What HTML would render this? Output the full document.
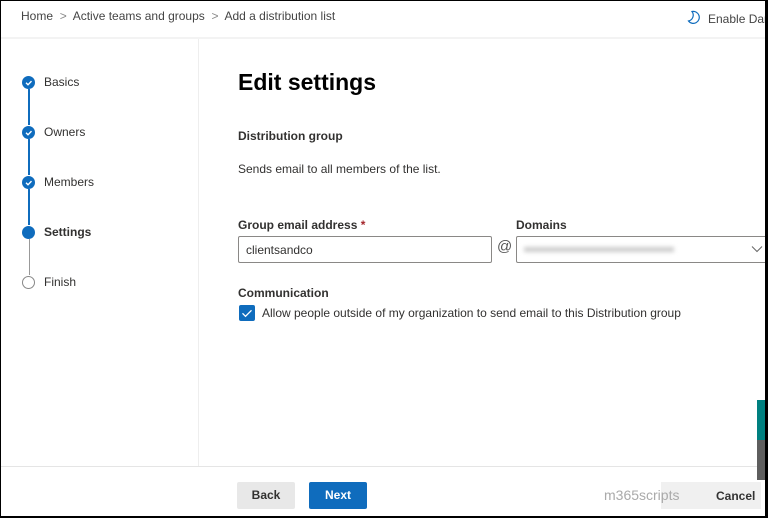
<!DOCTYPE html>
<html><head><meta charset="utf-8"><style>
*{margin:0;padding:0;box-sizing:border-box}
body{width:768px;height:518px;overflow:hidden;background:#000;font-family:"Liberation Sans",sans-serif;color:#323130;position:relative}
#p{position:absolute;left:1px;top:1px;width:764px;height:515px;background:#fff;overflow:hidden}
.a{position:absolute;white-space:nowrap}
.t{font-size:12px}
.st{position:absolute;left:21px;width:13px;height:13px;border-radius:50%;background:#0f6cbd}
.ln{position:absolute;left:27px;width:2px;height:36px;background:#0f6cbd}
</style></head><body><div id="p">
<div class="a t" style="left:20px;top:8px;color:#444">Home &nbsp;<span style="color:#888">&gt;</span>&nbsp; Active teams and groups &nbsp;<span style="color:#888">&gt;</span>&nbsp; Add a distribution list</div>
<svg class="a" style="left:686px;top:9px" width="14" height="14" viewBox="0 0 14 14"><path d="M5 1.5 A6 6 0 1 1 1.5 11 A6 6 0 0 0 5 1.5Z" fill="none" stroke="#0f6cbd" stroke-width="1.2"/></svg>
<div class="a t" style="left:707px;top:11px;color:#444">Enable Dark</div>
<div class="a" style="left:0;top:36px;width:764px;height:2px;background:#f3f3f3"></div>
<div class="a" style="left:197px;top:38px;width:1px;height:428px;background:#eee"></div>
<div class="a" style="left:0;top:465px;width:764px;height:1px;background:#e5e5e5"></div>

<div class="ln" style="top:88px"></div><div class="ln" style="top:138px"></div><div class="ln" style="top:188px"></div>
<div class="ln" style="top:238px;background:#999;width:1px;left:27.5px"></div>
<div class="st" style="top:75px"></div><div class="st" style="top:125px"></div><div class="st" style="top:175px"></div><div class="st" style="top:225px"></div>
<div class="st" style="top:275px;background:#fff;border:1.5px solid #888"></div>
<svg class="a" style="left:21px;top:75px" width="13" height="163"><g fill="none" stroke="#fff" stroke-width="1.4"><path d="M4 6.8l2 2 3.5-3.7"/><path d="M4 56.8l2 2 3.5-3.7"/><path d="M4 106.8l2 2 3.5-3.7"/></g></svg>
<div class="a t" style="left:43px;top:74px">Basics</div>
<div class="a t" style="left:43px;top:124px">Owners</div>
<div class="a t" style="left:43px;top:174px">Members</div>
<div class="a t" style="left:43px;top:224px;font-weight:bold">Settings</div>
<div class="a t" style="left:43px;top:274px">Finish</div>

<div class="a" style="left:237px;top:68px;font-size:23px;font-weight:bold;color:#000">Edit settings</div>
<div class="a t" style="left:237px;top:128px;font-weight:bold">Distribution group</div>
<div class="a t" style="left:237px;top:161px">Sends email to all members of the list.</div>
<div class="a t" style="left:237px;top:217px;font-weight:bold">Group email address <span style="color:#a4262c">*</span></div>
<div class="a" style="left:237px;top:235px;width:254px;height:27px;border:1px solid #8a8886;border-radius:2px;font-size:12px;padding:6px 7px">clientsandco</div>
<div class="a" style="left:496px;top:237px;font-size:15px;color:#555">@</div>
<div class="a t" style="left:515px;top:217px;font-weight:bold">Domains</div>
<div class="a" style="left:515px;top:235px;width:260px;height:27px;border:1px solid #8a8886;border-radius:2px"></div>
<div class="a" style="left:523px;top:246px;width:150px;height:5px;background:#ccc;filter:blur(2px)"></div>
<svg class="a" style="left:750px;top:244px" width="12" height="8"><path d="M1 1.5l5 5 5-5" fill="none" stroke="#666"/></svg>
<div class="a t" style="left:237px;top:285px;font-weight:bold">Communication</div>
<div class="a" style="left:238px;top:304px;width:16px;height:16px;background:#0f6cbd;border-radius:2px"></div>
<svg class="a" style="left:238px;top:304px" width="16" height="16"><path d="M3.5 8.3l3 3 6-6" fill="none" stroke="#fff" stroke-width="1.3"/></svg>
<div class="a t" style="left:261px;top:305px">Allow people outside of my organization to send email to this Distribution group</div>

<div class="a" style="left:236px;top:481px;width:58px;height:27px;background:#e8e8e8;border-radius:2px;font-size:12px;font-weight:bold;text-align:center;line-height:27px">Back</div>
<div class="a" style="left:308px;top:481px;width:58px;height:27px;background:#0f6cbd;color:#fff;border-radius:2px;font-size:12px;font-weight:bold;text-align:center;line-height:27px">Next</div>
<div class="a" style="left:660px;top:481px;width:100px;height:27px;background:#f0f0f0"></div>
<div class="a" style="left:603px;top:486px;font-size:14px;color:#aaa">m365scripts</div>
<div class="a t" style="left:715px;top:488px;font-weight:bold;color:#333">Cancel</div>
<div class="a" style="left:756px;top:399px;width:8px;height:40px;background:#008080"></div>
<div class="a" style="left:756px;top:439px;width:8px;height:40px;background:#5e5e5e"></div>
</div></body></html>
